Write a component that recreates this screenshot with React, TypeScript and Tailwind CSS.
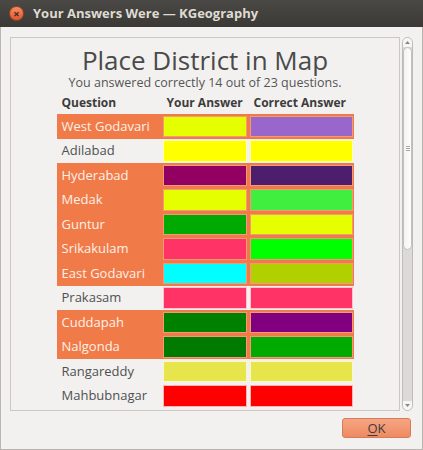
import React from 'react'

const rows = [
  { name: 'West Godavari', mine: '#e5ff00', right: '#9966cc', wrong: true },
  { name: 'Adilabad', mine: '#ffff00', right: '#ffff00', wrong: false },
  { name: 'Hyderabad', mine: '#920062', right: '#4d1e6e', wrong: true },
  { name: 'Medak', mine: '#e5ff00', right: '#40ee40', wrong: true },
  { name: 'Guntur', mine: '#00aa00', right: '#e5ff00', wrong: true },
  { name: 'Srikakulam', mine: '#ff3366', right: '#00ff00', wrong: true },
  { name: 'East Godavari', mine: '#00ffff', right: '#b0d000', wrong: true },
  { name: 'Prakasam', mine: '#ff3366', right: '#ff3366', wrong: false },
  { name: 'Cuddapah', mine: '#008000', right: '#800080', wrong: true },
  { name: 'Nalgonda', mine: '#007a00', right: '#00aa00', wrong: true },
  { name: 'Rangareddy', mine: '#e6e64c', right: '#e6e64c', wrong: false },
  { name: 'Mahbubnagar', mine: '#ff0000', right: '#ff0000', wrong: false },
  { name: 'Nizamabad', mine: '#008000', right: '#008000', wrong: false },
]

function Row({ name, mine, right, wrong }: (typeof rows)[number]) {
  return (
    <div
      className={`flex h-[24.5px] shrink-0 items-center pr-px ${
        wrong ? 'bg-[#f07b48] text-[#fdf0e8]' : 'text-[#505050]'
      }`}
    >
      <div className="w-[106px] shrink-0 pl-[5px] text-[13px] leading-none">{name}</div>
      <div
        className={`h-[21.5px] w-[84px] shrink-0 border ${wrong ? 'border-[#f39a74]' : 'border-white/70'}`}
        style={{ backgroundColor: mine }}
      />
      <div className="w-[3px] shrink-0" />
      <div
        className={`h-[21.5px] w-[103px] shrink-0 border ${wrong ? 'border-[#f39a74]' : 'border-white/70'}`}
        style={{ backgroundColor: right }}
      />
    </div>
  )
}

export default function App() {
  return (
    <div
      className="flex h-[450px] w-[423px] flex-col overflow-hidden bg-[#f2f1f0]"
      style={{ fontFamily: '"Open Sans", "DejaVu Sans", sans-serif' }}
    >
      {/* title bar */}
      <div className="flex h-[27px] shrink-0 items-center gap-[9px] bg-gradient-to-b from-[#4a4945] to-[#3a3935] pl-[9px]">
        <div className="flex h-[15px] w-[15px] items-center justify-center rounded-full border border-[#9a4326] bg-gradient-to-b from-[#f68d62] to-[#e0552f] text-[11px] font-bold leading-none text-[#3a2a24]">
          ×
        </div>
        <span className="text-[13px] font-bold text-[#dfdbd2]">Your Answers Were — KGeography</span>
      </div>

      <div className="flex min-h-0 flex-1 flex-col border-x border-b border-[#b9b6b1] px-[9px] pt-[10px]">
        <div className="flex h-[374px] shrink-0 gap-[2px]">
          {/* frame */}
          <div className="flex flex-1 flex-col items-center overflow-hidden border border-[#cbc8c3]">
            <div className="mt-[7px] text-[26px] leading-[30px] text-[#4a4a4a]">Place District in Map</div>
            <div className="text-[12.5px] leading-[16px] text-[#555]">
              You answered correctly 14 out of 23 questions.
            </div>
            <div className="flex w-[297px] shrink-0 flex-col">
              <div className="flex h-[23px] items-center text-[12px] font-bold text-[#3c3c3c]">
                <div className="w-[106px] pl-[5px]">Question</div>
                <div className="w-[87px] pl-[4px]">Your Answer</div>
                <div className="pl-[4px]">Correct Answer</div>
              </div>
              {rows.map((r) => (
                <Row key={r.name} {...r} />
              ))}
            </div>
          </div>

          {/* scrollbar */}
          <div className="flex w-[11px] shrink-0 flex-col rounded-full border border-[#bfbcb7] bg-[#dcdad6]">
            <div className="flex h-[9px] items-center justify-center rounded-t-full bg-[#f7f6f5]">
              <svg width="5" height="3" viewBox="0 0 5 3">
                <path d="M0 3 L2.5 0 L5 3 Z" fill="#8a8884" />
              </svg>
            </div>
            <div className="flex h-[203px] flex-col items-center justify-center gap-[1px] rounded-full border border-[#c4c1bc] bg-gradient-to-r from-[#f4f3f2] to-[#fdfdfd]">
              <div className="h-px w-[4px] bg-[#a9a7a3]" />
              <div className="h-px w-[4px] bg-[#a9a7a3]" />
              <div className="h-px w-[4px] bg-[#a9a7a3]" />
            </div>
            <div className="flex-1" />
            <div className="flex h-[9px] items-center justify-center rounded-b-full bg-[#f7f6f5]">
              <svg width="5" height="3" viewBox="0 0 5 3">
                <path d="M0 0 L2.5 3 L5 0 Z" fill="#8a8884" />
              </svg>
            </div>
          </div>
        </div>

        <div className="flex justify-end pr-[2px] pt-[7px]">
          <button className="flex h-[20px] w-[69px] items-center justify-center rounded-[3px] border border-[#d47b57] bg-gradient-to-b from-[#f6a583] to-[#ee8a62] text-[13px] leading-none text-[#3c3c3c]">
            <span className="underline underline-offset-2">O</span>K
          </button>
        </div>
      </div>
    </div>
  )
}
